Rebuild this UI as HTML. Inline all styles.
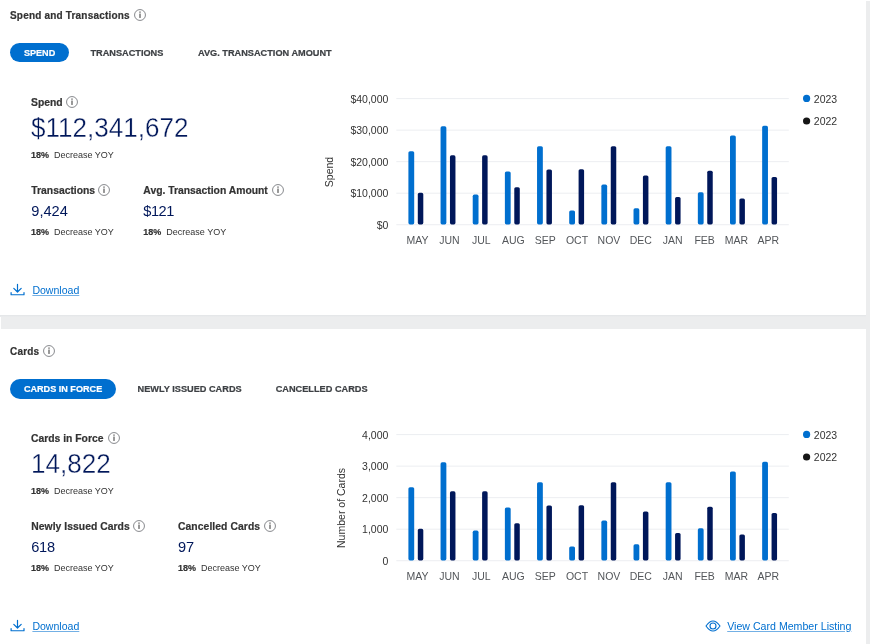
<!DOCTYPE html>
<html lang="en"><head><meta charset="utf-8"><title>Spend and Transactions</title>
<style>
html,body{margin:0;padding:0}
body{width:870px;height:644px;position:relative;overflow:hidden;background:#fff;font-family:"Liberation Sans",sans-serif;color:#333}
#w{position:absolute;left:0;top:0;width:870px;height:644px;will-change:transform}
.t{position:absolute;white-space:nowrap}
.b{font-weight:700;-webkit-text-stroke:0.2px currentColor}
.ic{position:absolute;overflow:visible}
.pill{position:absolute;background:#006fcf;border-radius:10px}
.lk{text-decoration:underline;text-decoration-thickness:1px;text-underline-offset:1px;text-decoration-color:rgba(0,111,207,.55)}
.big{-webkit-text-stroke:0.35px #fff;transform-origin:0 0;transform:scaleX(.965)}
.mid{}
.g{position:absolute;background:#ecedee}
.sh{position:absolute;left:0;top:314.5px;width:866px;height:2px;background:linear-gradient(#e3e5e7,#ecedee)}
</style></head><body><div id="w">
<div class="g" style="left:865.7px;top:1px;width:5px;height:643px"></div>
<div class="g" style="left:1px;top:314.6px;width:869px;height:14.2px"></div>
<div class="sh"></div>
<div class="t b" style="left:10.00px;top:10px;font-size:10px;line-height:11px;letter-spacing:0.19px;">Spend and Transactions</div>
<svg class="ic" style="left:133.10px;top:7.60px" width="14" height="14" viewBox="0 0 14 14"><circle cx="7" cy="7" r="5.45" fill="none" stroke="#606368" stroke-width="0.75"/><rect x="6.5" y="5.55" width="1" height="4.4" fill="#333"/><rect x="6.45" y="3.5" width="1.1" height="1.2" fill="#333"/></svg>
<div class="pill" style="left:9.7px;top:42.8px;width:59.7px;height:19.3px"></div>
<div class="t b" style="left:23.90px;top:48px;font-size:9.1px;line-height:10px;color:#fff;">SPEND</div>
<div class="t b" style="left:90.40px;top:48px;font-size:9.2px;line-height:10px;color:#3d4044;">TRANSACTIONS</div>
<div class="t b" style="left:198.00px;top:48px;font-size:9.2px;line-height:10px;color:#3d4044;">AVG. TRANSACTION AMOUNT</div>
<div class="t b" style="left:31.00px;top:96.6px;font-size:10.35px;line-height:11px;">Spend</div>
<svg class="ic" style="left:65.40px;top:95.00px" width="14" height="14" viewBox="0 0 14 14"><circle cx="7" cy="7" r="5.45" fill="none" stroke="#606368" stroke-width="0.75"/><rect x="6.5" y="5.55" width="1" height="4.4" fill="#333"/><rect x="6.45" y="3.5" width="1.1" height="1.2" fill="#333"/></svg>
<div class="t big" style="left:31.00px;top:113.1px;font-size:27px;line-height:30px;color:#00175a;">$112,341,672</div>
<div class="t b" style="left:31.00px;top:149.8px;font-size:9px;line-height:10px;">18%</div>
<div class="t" style="left:54.00px;top:149.8px;font-size:9px;line-height:10px;">Decrease YOY</div>
<div class="t b" style="left:31.30px;top:185.3px;font-size:10.35px;line-height:11px;">Transactions</div>
<svg class="ic" style="left:97.30px;top:183.40px" width="14" height="14" viewBox="0 0 14 14"><circle cx="7" cy="7" r="5.45" fill="none" stroke="#606368" stroke-width="0.75"/><rect x="6.5" y="5.55" width="1" height="4.4" fill="#333"/><rect x="6.45" y="3.5" width="1.1" height="1.2" fill="#333"/></svg>
<div class="t b" style="left:143.30px;top:185.3px;font-size:10.35px;line-height:11px;">Avg. Transaction Amount</div>
<svg class="ic" style="left:271.40px;top:183.40px" width="14" height="14" viewBox="0 0 14 14"><circle cx="7" cy="7" r="5.45" fill="none" stroke="#606368" stroke-width="0.75"/><rect x="6.5" y="5.55" width="1" height="4.4" fill="#333"/><rect x="6.45" y="3.5" width="1.1" height="1.2" fill="#333"/></svg>
<div class="t mid" style="left:31.30px;top:203.2px;font-size:14.6px;line-height:16px;color:#00175a;">9,424</div>
<div class="t mid" style="left:143.30px;top:203.2px;font-size:14.6px;line-height:16px;color:#00175a;letter-spacing:-0.5px;">$121</div>
<div class="t b" style="left:31.00px;top:227.2px;font-size:9px;line-height:10px;">18%</div>
<div class="t" style="left:54.00px;top:227.2px;font-size:9px;line-height:10px;">Decrease YOY</div>
<div class="t b" style="left:143.30px;top:227.2px;font-size:9px;line-height:10px;">18%</div>
<div class="t" style="left:166.30px;top:227.2px;font-size:9px;line-height:10px;">Decrease YOY</div>
<svg class="ic" style="left:0;top:85px" width="870" height="175" viewBox="0 85 870 175" font-family="Liberation Sans, sans-serif"><rect x="396.3" y="98.10" width="392.5" height="1" fill="#eceef1"/><text x="388.4" y="103" text-anchor="end" font-size="10.5" fill="#333">$40,000</text><rect x="396.3" y="129.63" width="392.5" height="1" fill="#eceef1"/><text x="388.4" y="134" text-anchor="end" font-size="10.5" fill="#333">$30,000</text><rect x="396.3" y="161.16" width="392.5" height="1" fill="#eceef1"/><text x="388.4" y="166" text-anchor="end" font-size="10.5" fill="#333">$20,000</text><rect x="396.3" y="192.69" width="392.5" height="1" fill="#eceef1"/><text x="388.4" y="197" text-anchor="end" font-size="10.5" fill="#333">$10,000</text><rect x="396.3" y="224.22" width="392.5" height="1" fill="#eceef1"/><text x="388.4" y="229" text-anchor="end" font-size="10.5" fill="#333">$0</text><rect x="408.40" y="151.22" width="5.8" height="73.23" rx="1.6" fill="#006fcf"/><rect x="417.80" y="192.80" width="5.5" height="31.65" rx="1.6" fill="#00175a"/><text x="417.60" y="243.9" text-anchor="middle" font-size="10.5" fill="#53565a">MAY</text><rect x="440.56" y="126.34" width="5.8" height="98.11" rx="1.6" fill="#006fcf"/><rect x="449.96" y="155.31" width="5.5" height="69.13" rx="1.6" fill="#00175a"/><text x="449.49" y="243.9" text-anchor="middle" font-size="10.5" fill="#53565a">JUN</text><rect x="472.72" y="194.53" width="5.8" height="29.92" rx="1.6" fill="#006fcf"/><rect x="482.12" y="155.31" width="5.5" height="69.13" rx="1.6" fill="#00175a"/><text x="481.38" y="243.9" text-anchor="middle" font-size="10.5" fill="#53565a">JUL</text><rect x="504.88" y="171.38" width="5.8" height="53.07" rx="1.6" fill="#006fcf"/><rect x="514.28" y="187.13" width="5.5" height="37.32" rx="1.6" fill="#00175a"/><text x="513.27" y="243.9" text-anchor="middle" font-size="10.5" fill="#53565a">AUG</text><rect x="537.04" y="146.18" width="5.8" height="78.27" rx="1.6" fill="#006fcf"/><rect x="546.44" y="169.49" width="5.5" height="54.96" rx="1.6" fill="#00175a"/><text x="545.16" y="243.9" text-anchor="middle" font-size="10.5" fill="#53565a">SEP</text><rect x="569.20" y="210.50" width="5.8" height="13.95" rx="1.6" fill="#006fcf"/><rect x="578.60" y="169.18" width="5.5" height="55.27" rx="1.6" fill="#00175a"/><text x="577.05" y="243.9" text-anchor="middle" font-size="10.5" fill="#53565a">OCT</text><rect x="601.36" y="184.61" width="5.8" height="39.84" rx="1.6" fill="#006fcf"/><rect x="610.76" y="146.18" width="5.5" height="78.27" rx="1.6" fill="#00175a"/><text x="608.94" y="243.9" text-anchor="middle" font-size="10.5" fill="#53565a">NOV</text><rect x="633.52" y="208.30" width="5.8" height="16.15" rx="1.6" fill="#006fcf"/><rect x="642.92" y="175.48" width="5.5" height="48.97" rx="1.6" fill="#00175a"/><text x="640.83" y="243.9" text-anchor="middle" font-size="10.5" fill="#53565a">DEC</text><rect x="665.68" y="146.18" width="5.8" height="78.27" rx="1.6" fill="#006fcf"/><rect x="675.08" y="196.99" width="5.5" height="27.46" rx="1.6" fill="#00175a"/><text x="672.72" y="243.9" text-anchor="middle" font-size="10.5" fill="#53565a">JAN</text><rect x="697.84" y="192.33" width="5.8" height="32.12" rx="1.6" fill="#006fcf"/><rect x="707.24" y="170.75" width="5.5" height="53.70" rx="1.6" fill="#00175a"/><text x="704.61" y="243.9" text-anchor="middle" font-size="10.5" fill="#53565a">FEB</text><rect x="730.00" y="135.47" width="5.8" height="88.98" rx="1.6" fill="#006fcf"/><rect x="739.40" y="198.41" width="5.5" height="26.04" rx="1.6" fill="#00175a"/><text x="736.50" y="243.9" text-anchor="middle" font-size="10.5" fill="#53565a">MAR</text><rect x="762.16" y="125.80" width="5.8" height="98.65" rx="1.6" fill="#006fcf"/><rect x="771.56" y="176.89" width="5.5" height="47.56" rx="1.6" fill="#00175a"/><text x="768.39" y="243.9" text-anchor="middle" font-size="10.5" fill="#53565a">APR</text><text transform="translate(332.8 172) rotate(-90)" text-anchor="middle" font-size="10.5" fill="#333">Spend</text><circle cx="806.6" cy="98.4" r="3.6" fill="#006fcf"/><text x="813.8" y="102.8" font-size="10.5" fill="#333">2023</text><circle cx="806.6" cy="121" r="3.6" fill="#161616"/><text x="813.8" y="125.4" font-size="10.5" fill="#333">2022</text></svg>
<svg class="ic" style="left:9px;top:281.80px" width="18" height="16" viewBox="0 0 18 16"><g fill="none" stroke="#006fcf" stroke-width="1.2" stroke-linecap="round" stroke-linejoin="round"><path d="M8.5 2.3v7.5M4.8 6.3l3.7 3.7 3.700-3.700M2.1 10.6v2.15h12.9v-2.15"/></g></svg>
<div class="t" style="left:32.40px;top:284px;font-size:10.55px;line-height:12px;color:#006fcf;"><span class="lk">Download</span></div>
<div class="t b" style="left:10.00px;top:346px;font-size:10px;line-height:11px;letter-spacing:0.19px;">Cards</div>
<svg class="ic" style="left:42.00px;top:343.70px" width="14" height="14" viewBox="0 0 14 14"><circle cx="7" cy="7" r="5.45" fill="none" stroke="#606368" stroke-width="0.75"/><rect x="6.5" y="5.55" width="1" height="4.4" fill="#333"/><rect x="6.45" y="3.5" width="1.1" height="1.2" fill="#333"/></svg>
<div class="pill" style="left:9.7px;top:379.3px;width:106.7px;height:19.4px"></div>
<div class="t b" style="left:23.90px;top:384px;font-size:9.1px;line-height:10px;color:#fff;">CARDS IN FORCE</div>
<div class="t b" style="left:137.50px;top:384px;font-size:9.2px;line-height:10px;color:#3d4044;">NEWLY ISSUED CARDS</div>
<div class="t b" style="left:275.70px;top:384px;font-size:9.2px;line-height:10px;color:#3d4044;">CANCELLED CARDS</div>
<div class="t b" style="left:31.00px;top:432.6px;font-size:10.35px;line-height:11px;">Cards in Force</div>
<svg class="ic" style="left:106.50px;top:431.00px" width="14" height="14" viewBox="0 0 14 14"><circle cx="7" cy="7" r="5.45" fill="none" stroke="#606368" stroke-width="0.75"/><rect x="6.5" y="5.55" width="1" height="4.4" fill="#333"/><rect x="6.45" y="3.5" width="1.1" height="1.2" fill="#333"/></svg>
<div class="t big" style="left:31.00px;top:449.1px;font-size:27px;line-height:30px;color:#00175a;">14,822</div>
<div class="t b" style="left:31.00px;top:485.8px;font-size:9px;line-height:10px;">18%</div>
<div class="t" style="left:54.00px;top:485.8px;font-size:9px;line-height:10px;">Decrease YOY</div>
<div class="t b" style="left:31.30px;top:521.3px;font-size:10.35px;line-height:11px;letter-spacing:0.04px;">Newly Issued Cards</div>
<svg class="ic" style="left:131.80px;top:519.40px" width="14" height="14" viewBox="0 0 14 14"><circle cx="7" cy="7" r="5.45" fill="none" stroke="#606368" stroke-width="0.75"/><rect x="6.5" y="5.55" width="1" height="4.4" fill="#333"/><rect x="6.45" y="3.5" width="1.1" height="1.2" fill="#333"/></svg>
<div class="t b" style="left:178.00px;top:521.3px;font-size:10.35px;line-height:11px;letter-spacing:0.07px;">Cancelled Cards</div>
<svg class="ic" style="left:263.00px;top:519.40px" width="14" height="14" viewBox="0 0 14 14"><circle cx="7" cy="7" r="5.45" fill="none" stroke="#606368" stroke-width="0.75"/><rect x="6.5" y="5.55" width="1" height="4.4" fill="#333"/><rect x="6.45" y="3.5" width="1.1" height="1.2" fill="#333"/></svg>
<div class="t mid" style="left:31.30px;top:539.2px;font-size:14.6px;line-height:16px;color:#00175a;letter-spacing:-0.3px;">618</div>
<div class="t mid" style="left:178.00px;top:539.2px;font-size:14.6px;line-height:16px;color:#00175a;">97</div>
<div class="t b" style="left:31.00px;top:563.2px;font-size:9px;line-height:10px;">18%</div>
<div class="t" style="left:54.00px;top:563.2px;font-size:9px;line-height:10px;">Decrease YOY</div>
<div class="t b" style="left:178.00px;top:563.2px;font-size:9px;line-height:10px;">18%</div>
<div class="t" style="left:201.00px;top:563.2px;font-size:9px;line-height:10px;">Decrease YOY</div>
<svg class="ic" style="left:0;top:421px" width="870" height="175" viewBox="0 85 870 175" font-family="Liberation Sans, sans-serif"><rect x="396.3" y="98.10" width="392.5" height="1" fill="#eceef1"/><text x="388.4" y="103" text-anchor="end" font-size="10.5" fill="#333">4,000</text><rect x="396.3" y="129.63" width="392.5" height="1" fill="#eceef1"/><text x="388.4" y="134" text-anchor="end" font-size="10.5" fill="#333">3,000</text><rect x="396.3" y="161.16" width="392.5" height="1" fill="#eceef1"/><text x="388.4" y="166" text-anchor="end" font-size="10.5" fill="#333">2,000</text><rect x="396.3" y="192.69" width="392.5" height="1" fill="#eceef1"/><text x="388.4" y="197" text-anchor="end" font-size="10.5" fill="#333">1,000</text><rect x="396.3" y="224.22" width="392.5" height="1" fill="#eceef1"/><text x="388.4" y="229" text-anchor="end" font-size="10.5" fill="#333">0</text><rect x="408.40" y="151.22" width="5.8" height="73.23" rx="1.6" fill="#006fcf"/><rect x="417.80" y="192.80" width="5.5" height="31.65" rx="1.6" fill="#00175a"/><text x="417.60" y="243.9" text-anchor="middle" font-size="10.5" fill="#53565a">MAY</text><rect x="440.56" y="126.34" width="5.8" height="98.11" rx="1.6" fill="#006fcf"/><rect x="449.96" y="155.31" width="5.5" height="69.13" rx="1.6" fill="#00175a"/><text x="449.49" y="243.9" text-anchor="middle" font-size="10.5" fill="#53565a">JUN</text><rect x="472.72" y="194.53" width="5.8" height="29.92" rx="1.6" fill="#006fcf"/><rect x="482.12" y="155.31" width="5.5" height="69.13" rx="1.6" fill="#00175a"/><text x="481.38" y="243.9" text-anchor="middle" font-size="10.5" fill="#53565a">JUL</text><rect x="504.88" y="171.38" width="5.8" height="53.07" rx="1.6" fill="#006fcf"/><rect x="514.28" y="187.13" width="5.5" height="37.32" rx="1.6" fill="#00175a"/><text x="513.27" y="243.9" text-anchor="middle" font-size="10.5" fill="#53565a">AUG</text><rect x="537.04" y="146.18" width="5.8" height="78.27" rx="1.6" fill="#006fcf"/><rect x="546.44" y="169.49" width="5.5" height="54.96" rx="1.6" fill="#00175a"/><text x="545.16" y="243.9" text-anchor="middle" font-size="10.5" fill="#53565a">SEP</text><rect x="569.20" y="210.50" width="5.8" height="13.95" rx="1.6" fill="#006fcf"/><rect x="578.60" y="169.18" width="5.5" height="55.27" rx="1.6" fill="#00175a"/><text x="577.05" y="243.9" text-anchor="middle" font-size="10.5" fill="#53565a">OCT</text><rect x="601.36" y="184.61" width="5.8" height="39.84" rx="1.6" fill="#006fcf"/><rect x="610.76" y="146.18" width="5.5" height="78.27" rx="1.6" fill="#00175a"/><text x="608.94" y="243.9" text-anchor="middle" font-size="10.5" fill="#53565a">NOV</text><rect x="633.52" y="208.30" width="5.8" height="16.15" rx="1.6" fill="#006fcf"/><rect x="642.92" y="175.48" width="5.5" height="48.97" rx="1.6" fill="#00175a"/><text x="640.83" y="243.9" text-anchor="middle" font-size="10.5" fill="#53565a">DEC</text><rect x="665.68" y="146.18" width="5.8" height="78.27" rx="1.6" fill="#006fcf"/><rect x="675.08" y="196.99" width="5.5" height="27.46" rx="1.6" fill="#00175a"/><text x="672.72" y="243.9" text-anchor="middle" font-size="10.5" fill="#53565a">JAN</text><rect x="697.84" y="192.33" width="5.8" height="32.12" rx="1.6" fill="#006fcf"/><rect x="707.24" y="170.75" width="5.5" height="53.70" rx="1.6" fill="#00175a"/><text x="704.61" y="243.9" text-anchor="middle" font-size="10.5" fill="#53565a">FEB</text><rect x="730.00" y="135.47" width="5.8" height="88.98" rx="1.6" fill="#006fcf"/><rect x="739.40" y="198.41" width="5.5" height="26.04" rx="1.6" fill="#00175a"/><text x="736.50" y="243.9" text-anchor="middle" font-size="10.5" fill="#53565a">MAR</text><rect x="762.16" y="125.80" width="5.8" height="98.65" rx="1.6" fill="#006fcf"/><rect x="771.56" y="176.89" width="5.5" height="47.56" rx="1.6" fill="#00175a"/><text x="768.39" y="243.9" text-anchor="middle" font-size="10.5" fill="#53565a">APR</text><text transform="translate(345.3 172) rotate(-90)" text-anchor="middle" font-size="10.5" fill="#333">Number of Cards</text><circle cx="806.6" cy="98.4" r="3.6" fill="#006fcf"/><text x="813.8" y="102.8" font-size="10.5" fill="#333">2023</text><circle cx="806.6" cy="121" r="3.6" fill="#161616"/><text x="813.8" y="125.4" font-size="10.5" fill="#333">2022</text></svg>
<svg class="ic" style="left:9px;top:617.80px" width="18" height="16" viewBox="0 0 18 16"><g fill="none" stroke="#006fcf" stroke-width="1.2" stroke-linecap="round" stroke-linejoin="round"><path d="M8.5 2.3v7.5M4.8 6.3l3.7 3.7 3.700-3.700M2.1 10.6v2.15h12.9v-2.15"/></g></svg>
<div class="t" style="left:32.40px;top:620px;font-size:10.55px;line-height:12px;color:#006fcf;"><span class="lk">Download</span></div>
<svg class="ic" style="left:702.7px;top:615.6px" width="20" height="20" viewBox="-10 -10 20 20"><g fill="none" stroke="#006fcf" stroke-width="1.1" stroke-linejoin="round"><path d="M-7 0C-4.7-3.3-2.4-5.05 0-5.05S4.7-3.3 7 0C4.7 3.3 2.400 5.05 0 5.05S-4.7 3.3-7 0z"/><circle cx="0" cy="0" r="3"/></g></svg>
<div class="t" style="left:727.20px;top:619.8px;font-size:10.62px;line-height:12px;color:#006fcf;"><span class="lk">View Card Member Listing</span></div>
</div></body></html>
